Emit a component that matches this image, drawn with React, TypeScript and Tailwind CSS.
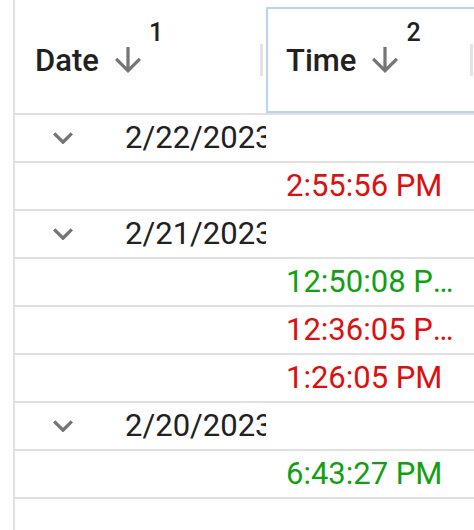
import { Fragment } from 'react'

interface TimeEntry {
  time: string
  up: boolean
}

interface DateGroup {
  date: string
  entries: TimeEntry[]
}

const groups: DateGroup[] = [
  { date: '2/22/2023', entries: [{ time: '2:55:56 PM', up: false }] },
  {
    date: '2/21/2023',
    entries: [
      { time: '12:50:08 PM', up: true },
      { time: '12:36:05 PM', up: false },
      { time: '1:26:05 PM', up: false },
    ],
  },
  { date: '2/20/2023', entries: [{ time: '6:43:27 PM', up: true }] },
]

function ArrowDown() {
  return (
    <svg width="26" height="26" viewBox="4 4 16 16" className="fill-[#757575]">
      <path d="M20 12l-1.41-1.41L13 16.17V4h-2v12.17l-5.58-5.59L4 12l8 8 8-8z" />
    </svg>
  )
}

function Chevron() {
  return (
    <svg width="20" height="12.5" viewBox="6 8.5 12 7.5" className="fill-[#757575] shrink-0">
      <path d="M16.59 8.59 12 13.17 7.41 8.59 6 10l6 6 6-6z" />
    </svg>
  )
}

function HeaderCell({ title, badge, focused, width }: { title: string; badge: string; focused?: boolean; width: string }) {
  return (
    <div
      className={`${width} shrink-0 mt-[7px] h-[106px] flex items-center pl-[20px] pr-[3px] ${
        focused ? 'ring-2 ring-inset ring-[#b7d5f3]' : ''
      }`}
    >
      <span className="font-medium text-[#212121] pt-[2px]">{title}</span>
      <div className="relative ml-[16px]">
        <ArrowDown />
        <span className="absolute left-[34px] top-[-27px] text-[25px] leading-none font-medium text-[#212121]">
          {badge}
        </span>
      </div>
      <div className="ml-auto w-[3px] h-[32px] bg-[#e3e3e3]" />
    </div>
  )
}

export default function App() {
  return (
    <div className="w-[474px] h-[530px] bg-white overflow-hidden font-[Roboto,sans-serif] text-[31px] leading-[1.2]">
      <div className="ml-[13px] h-full border-l-2 border-[#e0e0e0] w-[500px]">
        <div className="flex h-[115px] border-b-2 border-[#e0e0e0]">
          <HeaderCell title="Date" badge="1" width="w-[251px]" />
          <HeaderCell title="Time" badge="2" width="w-[210px]" focused />
        </div>

        {groups.map(group => (
          <Fragment key={group.date}>
            <div className="flex h-[48px] border-b-2 border-[#e0e0e0]">
              <div className="w-[251px] shrink-0 flex items-center pl-[38px]">
                <Chevron />
                <span className="ml-[52px] flex-1 min-w-0 overflow-hidden whitespace-nowrap text-[#212121]">
                  {group.date}
                </span>
              </div>
              <div className="w-[210px] shrink-0" />
            </div>
            {group.entries.map(entry => (
              <div key={entry.time} className="flex h-[48px] border-b-2 border-[#e0e0e0]">
                <div className="w-[251px] shrink-0" />
                <div className="w-[210px] shrink-0 flex items-center pl-[20px] pr-[18px]">
                  <span
                    className={`min-w-0 overflow-hidden text-ellipsis whitespace-nowrap ${
                      entry.up ? 'text-[#12a012]' : 'text-[#dc1010]'
                    }`}
                  >
                    {entry.time}
                  </span>
                </div>
              </div>
            ))}
          </Fragment>
        ))}
      </div>
    </div>
  )
}
